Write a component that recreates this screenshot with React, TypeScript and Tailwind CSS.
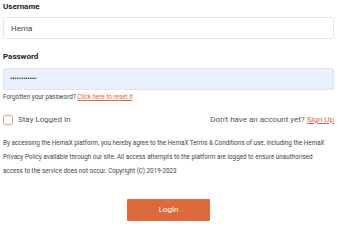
import { FC } from "react";

const Label: FC<{ text: string; className?: string }> = ({ text, className }) => (
  <label className={`block text-[8px] leading-[12px] font-bold text-[#222] ${className ?? ""}`}>
    {text}
  </label>
);

export default function App() {
  return (
    <div
      className="w-[344px] h-[227px] bg-white overflow-hidden"
      style={{ fontFamily: "Roboto, 'Liberation Sans', sans-serif" }}
    >
      <form className="ml-[3px] w-[331px] pt-[1px]" onSubmit={(e) => e.preventDefault()}>
        {/* Username */}
        <Label text="Username" />
        <input
          readOnly
          value="Hema"
          className="mt-[4px] block w-full h-[22px] px-[7px] text-[8px] text-[#444] bg-white border border-[#e6e6e6] rounded-[2px] outline-none"
        />

        {/* Password */}
        <Label text="Password" className="mt-[12px]" />
        <input
          readOnly
          type="password"
          value="hemapassword"
          className="mt-[5px] block w-full h-[22px] px-[6px] text-[6.5px] text-[#222] bg-[#e8f0fe] border border-[#dde4f0] rounded-[2px] outline-none"
        />
        <p className="mt-[2px] text-[6.3px] leading-[10px] text-[#444]">
          Forgotten your password?{" "}
          <a href="#" className="text-[#e0653c] underline">
            Click here to reset it
          </a>
        </p>

        {/* Stay logged in / sign up */}
        <div className="mt-[13px] flex items-center justify-between h-[10px]">
          <label className="flex items-center gap-[5px] text-[8px] text-[#555]">
            <input
              type="checkbox"
              className="appearance-none w-[10px] h-[10px] border border-[#e6ab98] rounded-[2px] bg-white"
            />
            Stay Logged In
          </label>
          <span className="text-[8px] text-[#555]">
            Don't have an account yet?{" "}
            <a href="#" className="text-[#e0653c] underline">
              Sign Up
            </a>
          </span>
        </div>

        {/* Terms */}
        <p className="mt-[11px] text-[6.3px] leading-[14px] text-[#444] whitespace-nowrap">
          By accessing the HemaX platform, you hereby agree to the HemaX Terms &amp; Conditions of use,
          including the HemaX
          <br />
          Privacy Policy available through our site. All access attempts to the platform are logged to
          ensure unauthorised
          <br />
          access to the service does not occur. Copyright (C) 2019-2023
        </p>

        <div className="mt-[21px] flex justify-center">
          <button
            type="submit"
            className="w-[83px] h-[22px] bg-[#dc6a3c] text-white text-[8px] rounded-[1px]"
          >
            Login
          </button>
        </div>
      </form>
    </div>
  );
}
